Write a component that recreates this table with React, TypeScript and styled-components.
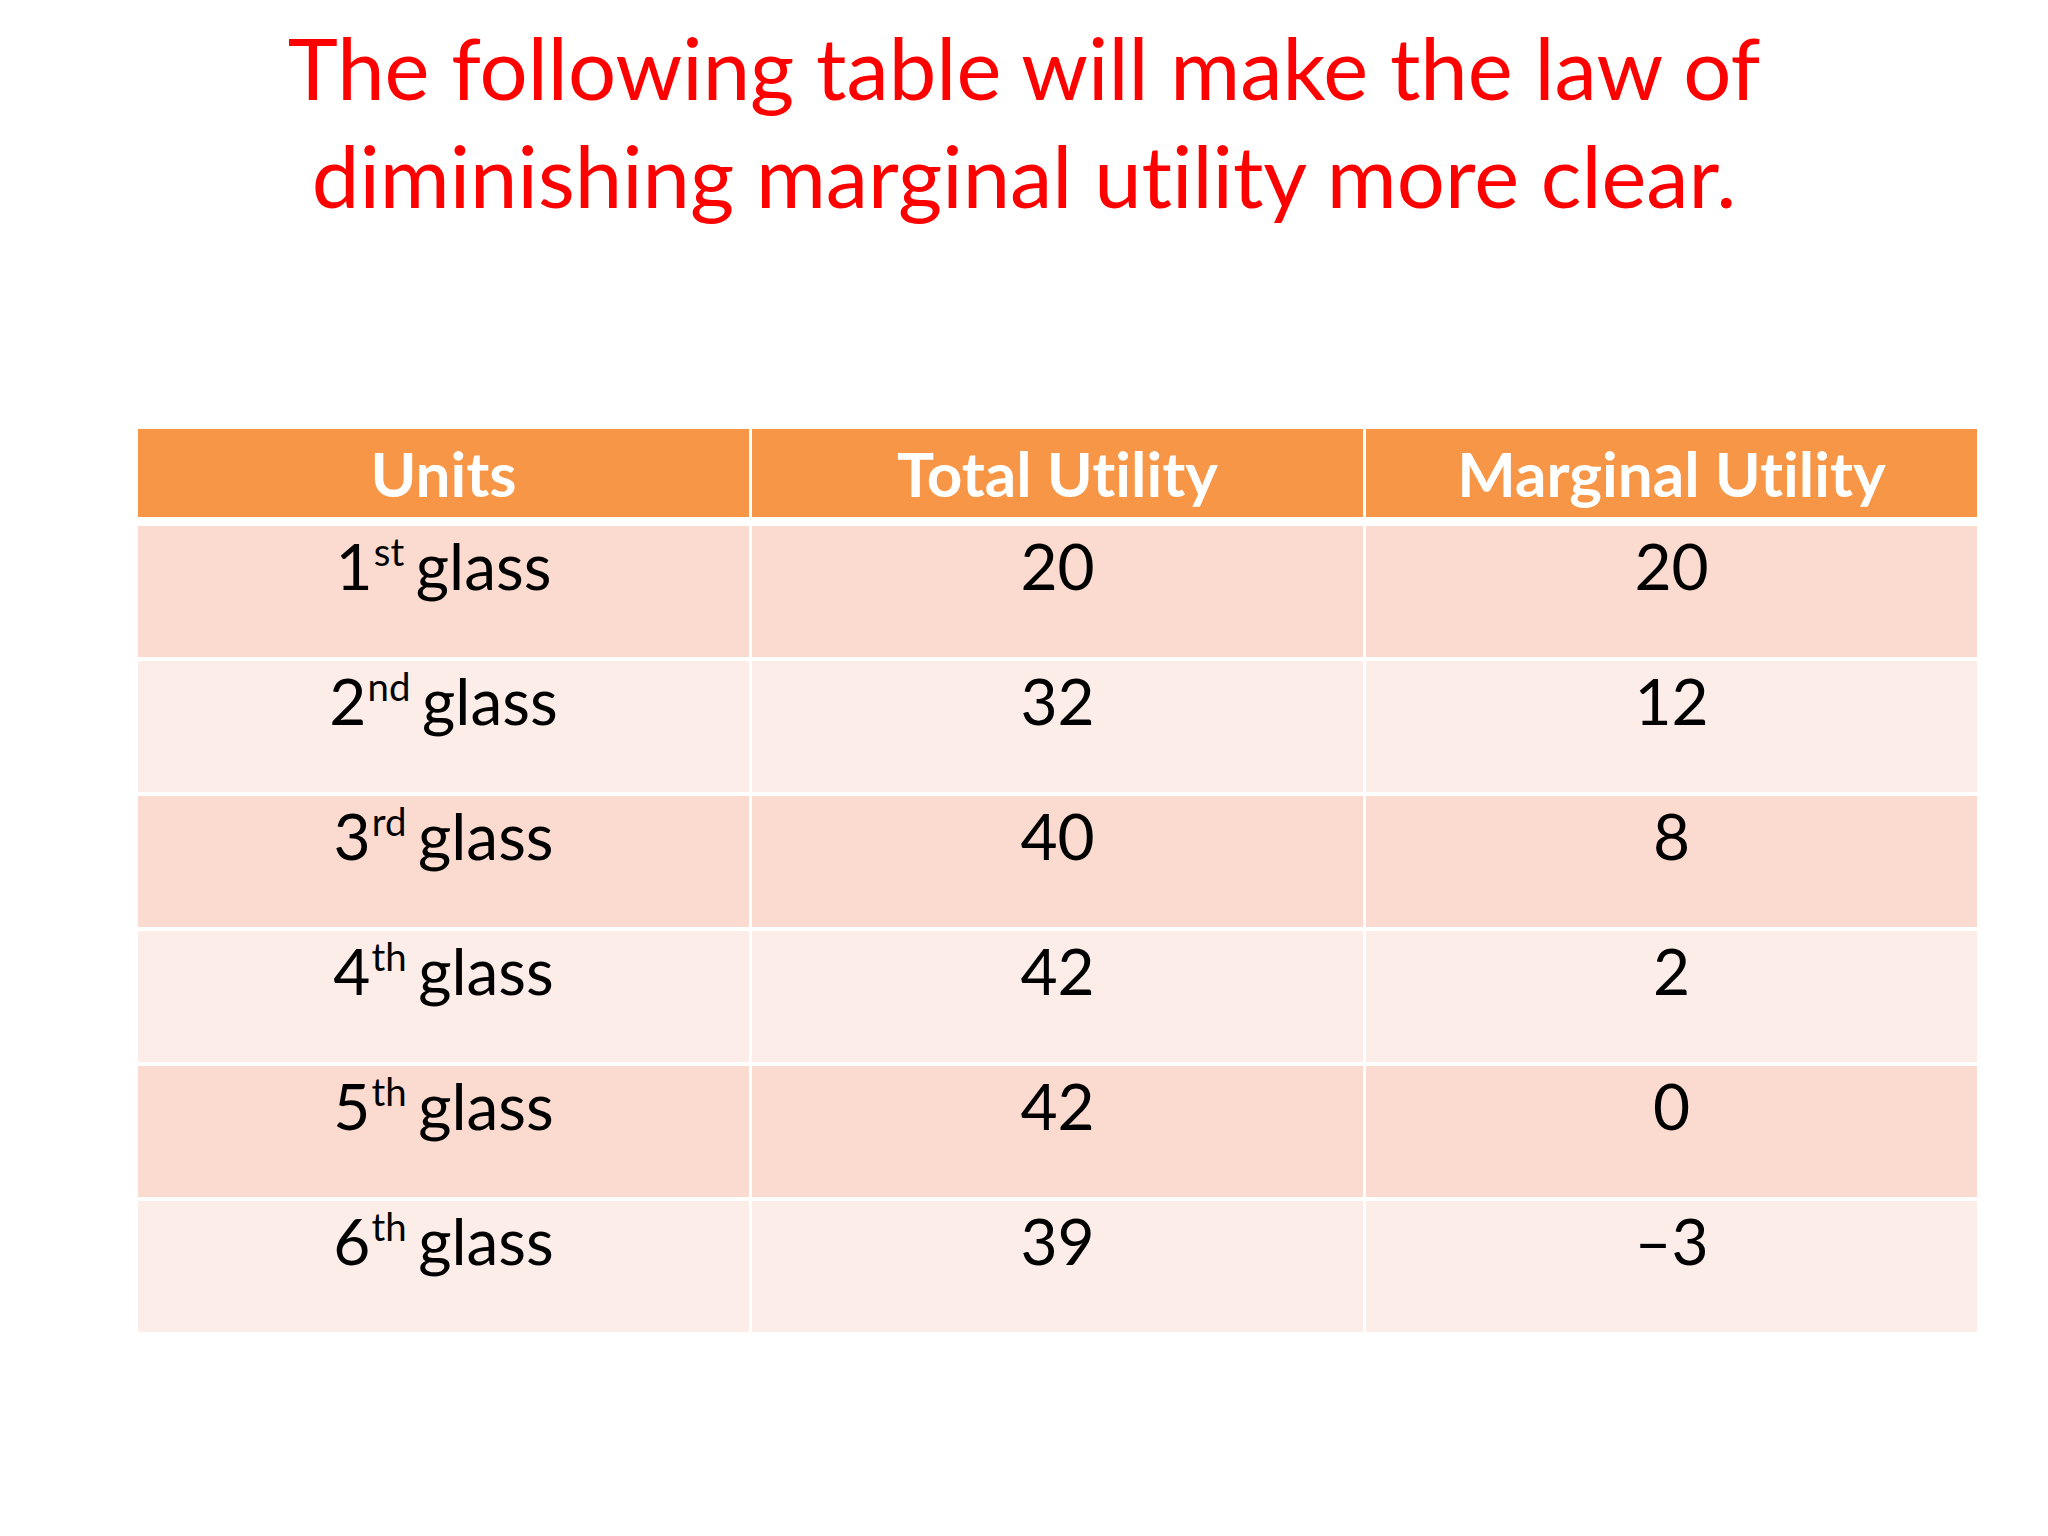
import styled, { createGlobalStyle } from "styled-components";

const GlobalStyle = createGlobalStyle`
    html, body {
        margin: 0;
        padding: 0;
        background: #ffffff;
    }
    body {
        font-family: Lato, "Open Sans", "Liberation Sans", sans-serif;
        font-variant-ligatures: none;
        font-feature-settings: "liga" 0, "clig" 0;
    }
`;

const Slide = styled.div`
    width: 2048px;
    height: 1536px;
    background: #ffffff;
    display: flex;
    flex-direction: column;
    overflow: hidden;
`;

const Title = styled.h1`
    margin: 0;
    padding-top: 13px;
    font-family: Lato, "Open Sans", sans-serif;
    font-weight: 400;
    font-size: 85px;
    line-height: 108px;
    color: #ff0000;
    text-align: center;
`;

const Table = styled.div`
    margin-top: 200px;
    margin-left: 138px;
    width: 1840px;
    display: flex;
    flex-direction: column;
    gap: 9px;
`;

const Body = styled.div`
    display: flex;
    flex-direction: column;
    gap: 4px;
`;

const Row = styled.div<{ $head?: boolean }>`
    display: grid;
    grid-template-columns: 611px 611px 611px;
    column-gap: 3px;
    height: ${(p) => (p.$head ? "88px" : "131px")};
`;

const Cell = styled.div<{ $head?: boolean; $band?: boolean }>`
    background: ${(p) =>
        p.$head ? "#f79646" : p.$band ? "#fbdbcf" : "#fcede8"};
    color: ${(p) => (p.$head ? "#ffffff" : "#000000")};
    font-family: Lato, "Open Sans", sans-serif;
    font-weight: ${(p) => (p.$head ? 700 : 400)};
    font-size: ${(p) => (p.$head ? "62px" : "64px")};
    line-height: ${(p) => (p.$head ? "88px" : "80px")};
    text-align: center;
`;

const Sup = styled.sup`
    font-size: 0.6em;
    vertical-align: 0;
    position: relative;
    top: -0.62em;
    margin-right: 0.3em;
    margin-left: 0.03em;
`;

const rows = [
    { n: "1", s: "st", tu: "20", mu: "20" },
    { n: "2", s: "nd", tu: "32", mu: "12" },
    { n: "3", s: "rd", tu: "40", mu: "8" },
    { n: "4", s: "th", tu: "42", mu: "2" },
    { n: "5", s: "th", tu: "42", mu: "0" },
    { n: "6", s: "th", tu: "39", mu: "–3" },
];

const App = () => {
    return (
        <Slide>
            <GlobalStyle />
            <Title>
                The following table will make the law of
                <br />
                diminishing marginal utility more clear.
            </Title>
            <Table>
                <Row $head>
                    <Cell $head>Units</Cell>
                    <Cell $head>Total Utility</Cell>
                    <Cell $head>Marginal Utility</Cell>
                </Row>
                <Body>
                    {rows.map((r, i) => (
                        <Row key={r.n}>
                            <Cell $band={i % 2 === 0}>
                                {r.n}
                                <Sup>{r.s}</Sup>glass
                            </Cell>
                            <Cell $band={i % 2 === 0}>{r.tu}</Cell>
                            <Cell $band={i % 2 === 0}>{r.mu}</Cell>
                        </Row>
                    ))}
                </Body>
            </Table>
        </Slide>
    );
};

export default App;
